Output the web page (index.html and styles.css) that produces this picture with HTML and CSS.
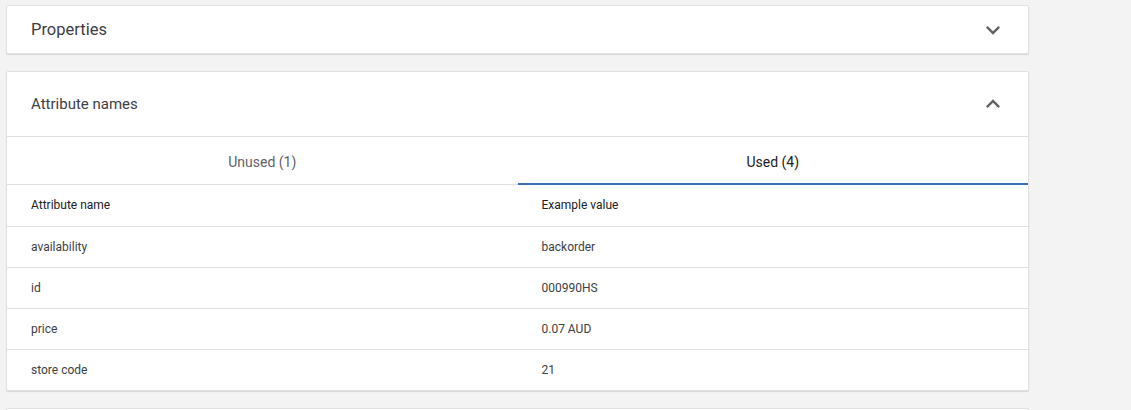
FILE: index.html
```html
<!DOCTYPE html>
<html lang="en">
<head>
  <meta charset="UTF-8">
  <title>Attribute names</title>
  <link rel="stylesheet" href="styles.css">
</head>
<body>
  <div class="page">
    <div class="card">
      <div class="card-head small">
        <span class="title big">Properties</span>
        <svg class="chev" width="28" height="28" viewBox="0 0 24 24"><path d="M7.41 8.59 12 13.17l4.59-4.58L18 10l-6 6-6-6z"/></svg>
      </div>
    </div>

    <div class="card">
      <div class="card-head">
        <span class="title">Attribute names</span>
        <svg class="chev" width="28" height="28" viewBox="0 0 24 24"><path d="M7.41 15.41 12 10.83l4.59 4.58L18 14l-6-6-6 6z"/></svg>
      </div>
      <div class="tabs">
        <div class="tab">Unused (1)</div>
        <div class="tab active">Used (4)</div>
      </div>
      <table class="attrs">
        <thead>
          <tr><th>Attribute name</th><th>Example value</th></tr>
        </thead>
        <tbody>
          <tr><td>availability</td><td>backorder</td></tr>
          <tr><td>id</td><td>000990HS</td></tr>
          <tr><td>price</td><td>0.07 AUD</td></tr>
          <tr><td>store code</td><td>21</td></tr>
        </tbody>
      </table>
    </div>

    <div class="card"><div class="card-head small"></div></div>
  </div>
</body>
</html>
```

FILE: styles.css
```css
* {
  margin: 0;
  padding: 0;
  box-sizing: border-box;
}
body {
  background-color: #f3f3f3;
  font-family: Roboto, "Liberation Sans", sans-serif;
  color: #3c4043;
}
.page {
  padding: 5px 0 0 6px;
  width: 1029px;
  display: flex;
  flex-direction: column;
  gap: 17px;
}
.card {
  background-color: #fff;
  border: 1px solid #e0e0e0;
  border-radius: 2px;
  box-shadow: 0 1px 1px rgba(0, 0, 0, 0.12);
}
.card-head {
  height: 65px;
  display: flex;
  align-items: center;
  justify-content: space-between;
  padding: 0 21px 0 24px;
  border-bottom: 1px solid #e0e0e0;
}
.card-head.small {
  height: 47px;
  border-bottom: none;
}
.title {
  font-size: 15px;
  color: #3c4043;
}
.title.big {
  font-size: 16.5px;
  color: #3c4043;
}
.chev {
  fill: #5f6368;
}
/* tabs */
.tabs {
  display: flex;
  border-bottom: 1px solid #e0e0e0;
}
.tab {
  flex: 1;
  height: 48px;
  padding-top: 4px;
  display: flex;
  align-items: center;
  justify-content: center;
  font-size: 14px;
  color: #5f6368;
  border-bottom: 2px solid transparent;
  margin-bottom: -1px;
}
.tab.active {
  color: #202124;
  border-bottom-color: #3b6db3;
}
/* table */
.attrs {
  width: 100%;
  border-collapse: collapse;
  font-size: 12px;
}
.attrs th, .attrs td {
  width: 50%;
  height: 41px;
  padding: 0 24px;
  text-align: left;
  border-bottom: 1px solid #e0e0e0;
}
.attrs th {
  font-weight: 400;
  color: #202124;
}
.attrs tbody tr:last-child td {
  border-bottom: none;
}
```
